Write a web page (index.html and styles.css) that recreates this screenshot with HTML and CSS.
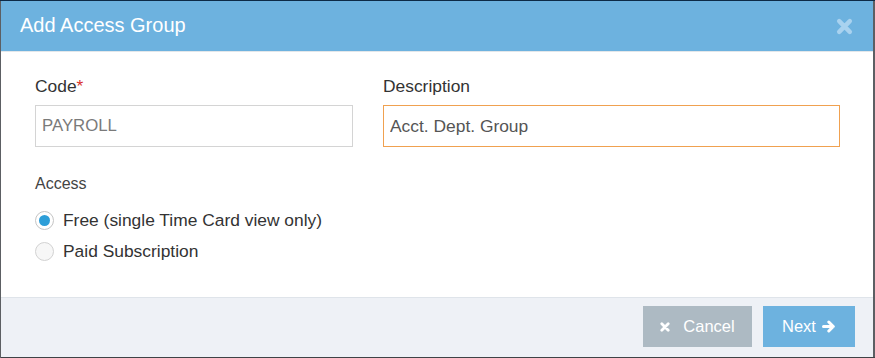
FILE: index.html
```html
<!DOCTYPE html>
<html lang="en">
<head>
    <meta charset="UTF-8">
    <title>Add Access Group</title>
    <link rel="stylesheet" href="styles.css">
</head>
<body>
    <div class="backdrop">
        <div class="modal">
            <div class="modal-header">
                <h2>Add Access Group</h2>
                <span class="close-btn">
                    <svg width="17" height="17" viewBox="0 0 16 16"><path d="M3 3 L13 13 M13 3 L3 13" stroke="currentColor" stroke-width="4.2" stroke-linecap="round"/></svg>
                </span>
            </div>

            <div class="modal-body">
                <div class="row">
                    <div class="field">
                        <label>Code<span class="req">*</span></label>
                        <input type="text" class="input code" value="PAYROLL">
                    </div>
                    <div class="field">
                        <label>Description</label>
                        <input type="text" class="input active" value="Acct. Dept. Group">
                    </div>
                </div>

                <div class="access">
                    <div class="access-title">Access</div>
                    <div class="radio">
                        <span class="dot checked"></span>
                        Free (single Time Card view only)
                    </div>
                    <div class="radio">
                        <span class="dot"></span>
                        Paid Subscription
                    </div>
                </div>
            </div>

            <div class="modal-footer">
                <button class="btn cancel-btn">
                    <svg width="10" height="10" viewBox="0 0 10 10"><path d="M1.8 1.8 L8.2 8.2 M8.2 1.8 L1.8 8.2" stroke="currentColor" stroke-width="2.8" stroke-linecap="round"/></svg>
                    Cancel
                </button>
                <button class="btn next-btn">
                    Next
                    <svg width="14" height="13" viewBox="0 0 14 13"><path d="M1.5 6.5 H11 M6.8 2 L11.3 6.5 L6.8 11" stroke="currentColor" stroke-width="3" fill="none" stroke-linecap="round" stroke-linejoin="round"/></svg>
                </button>
            </div>
        </div>
        <div class="behind"></div>
    </div>
</body>
</html>
```

FILE: styles.css
```css
* {
    margin: 0;
    padding: 0;
    box-sizing: border-box;
}

body {
    background: #5c5f63;
    font-family: "Liberation Sans", Arial, sans-serif;
    overflow: hidden;
}

.backdrop {
    border-top: 1px solid #0d2a47;
    padding-left: 1px;
    height: 358px;
}

/* Modal */
.modal {
    width: 872px;
    background: white;
}

.modal-header {
    background: #6db2df;
    height: 51px;
    border-bottom: 1px solid #e3e7ea;
    display: flex;
    align-items: center;
    justify-content: space-between;
    padding: 0 20px 0 19px;
}

.modal-header h2 {
    color: white;
    font-size: 20px;
    font-weight: normal;
    margin-top: -2px;
}

.close-btn {
    color: #a9d2ef;
    display: flex;
    margin-top: 1px;
}

.modal-body {
    height: 246px;
    padding: 24px 33px 0 34px;
    border-bottom: 1px solid #dfe4ea;
}

.row {
    display: flex;
    gap: 30px;
}

.field label {
    display: block;
    font-size: 17.4px;
    color: #333;
    line-height: 21px;
    margin-bottom: 8px;
}

.field:first-child {
    width: 318px;
}

.field:last-child {
    width: 457px;
}

.req {
    color: #d9302a;
}

.input {
    width: 100%;
    height: 42px;
    border: 1px solid #d4d4d4;
    padding: 0 6px;
    font-family: inherit;
    font-size: 17.4px;
    color: #555;
    outline: none;
}

.input.code {
    color: #7a7a7a;
    font-size: 16.8px;
}

.input.active {
    border-color: #f0a150;
}

/* Access radios */
.access {
    margin-top: 28px;
}

.access-title {
    font-size: 16px;
    color: #444;
    line-height: 18px;
    margin-bottom: 12px;
}

.radio {
    display: flex;
    align-items: center;
    gap: 9px;
    font-size: 17.4px;
    color: #333;
    height: 31px;
}

.dot {
    width: 19px;
    height: 19px;
    border-radius: 50%;
    border: 1px solid #d2d2d2;
    background: #f7f7f7;
    position: relative;
}

.dot.checked {
    background: white;
    border-color: #c5c5c5;
}

.dot.checked::after {
    content: "";
    position: absolute;
    top: 3px;
    left: 3px;
    width: 11px;
    height: 11px;
    border-radius: 50%;
    background: #2d9ed8;
}

/* Footer */
.modal-footer {
    background: #eef1f6;
    height: 59px;
    display: flex;
    justify-content: flex-end;
    gap: 11px;
    padding: 8px 18px 0 0;
}

.btn {
    height: 41px;
    border: none;
    color: white;
    font-family: inherit;
    font-size: 16.5px;
    display: flex;
    align-items: center;
    justify-content: center;
    gap: 9px;
}

.cancel-btn {
    width: 109px;
    background: #adbac3;
    gap: 13px;
}

.next-btn {
    width: 92px;
    background: #6db2df;
    gap: 6px;
}

.behind {
    background: #f4f5f7;
    border-top: 1px solid #3f4246;
    height: 2px;
}
```
